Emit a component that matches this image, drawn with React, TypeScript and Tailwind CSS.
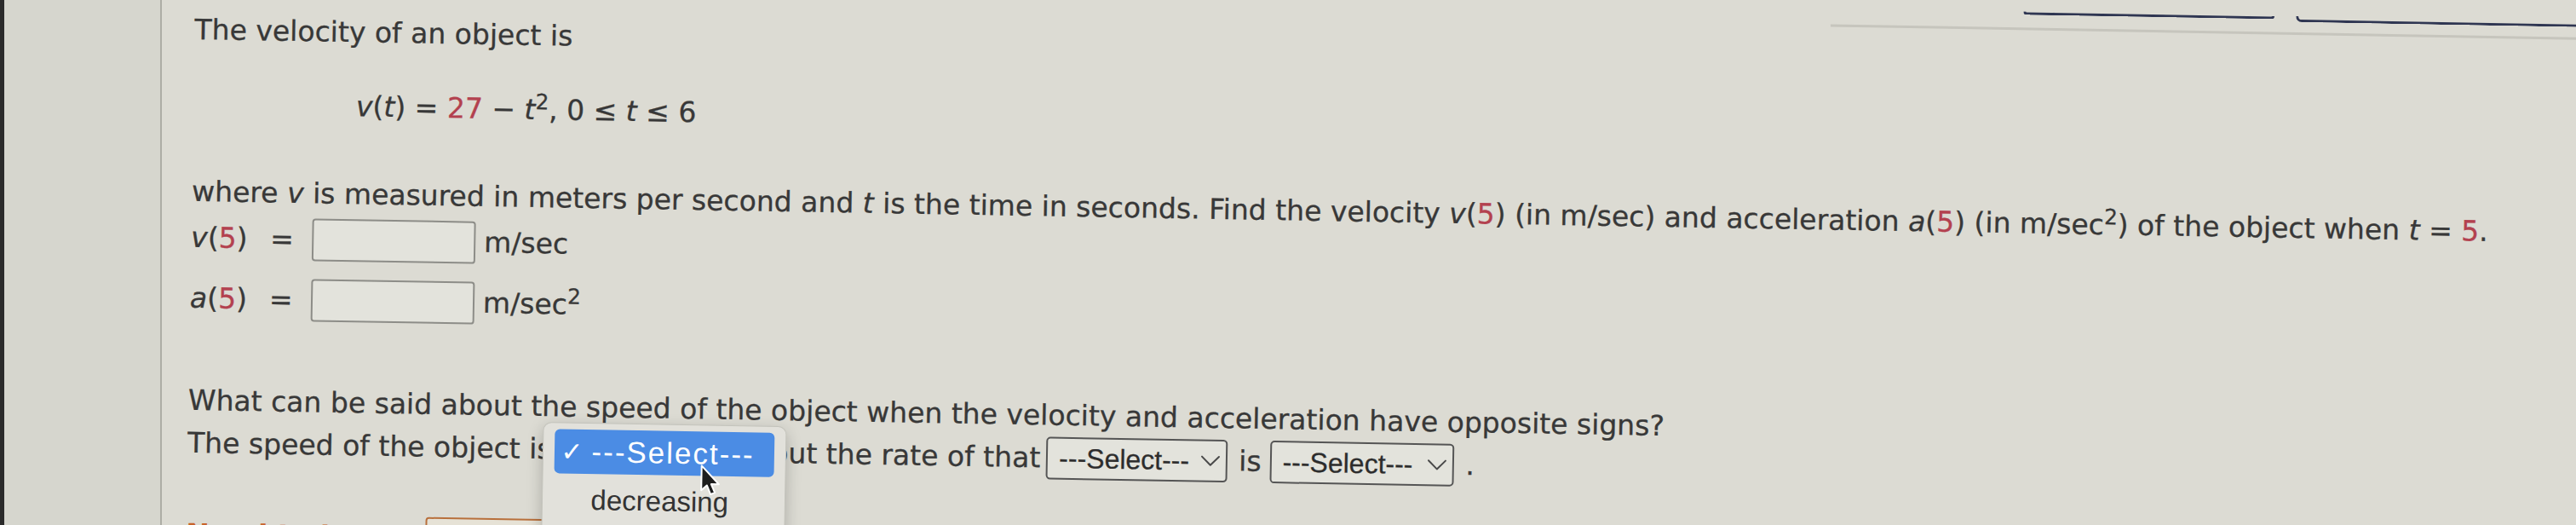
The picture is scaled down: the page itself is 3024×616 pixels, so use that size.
import React from "react";

const I = ({ children }: { children: React.ReactNode }) => <span className="italic">{children}</span>;
const R = ({ children }: { children: React.ReactNode }) => <span className="text-[#b3414f] [-webkit-text-stroke:0.3px_#b3414f]">{children}</span>;

function Chevron() {
  return (
    <svg width="24" height="14" viewBox="0 0 24 14" className="shrink-0">
      <path d="M2 2 L12 12 L22 2" fill="none" stroke="#4a4a4a" strokeWidth="2" strokeLinecap="round" strokeLinejoin="round" />
    </svg>
  );
}

function Select({ w }: { w: string }) {
  return (
    <div className={`flex items-center justify-between ${w} h-[50px] border-2 border-[#555555] rounded-[5px] bg-[#e3e3dc] pl-[13px] pr-[6px] font-['Liberation_Sans',Arial,sans-serif] text-[32px] leading-none text-[#2c2c2c]`}>
      <span>---Select---</span>
      <Chevron />
    </div>
  );
}

function Cursor() {
  return (
    <svg width="28" height="40" viewBox="0 0 28 40" className="absolute left-[184px] top-[45px]">
      <path d="M2 2 L2 31 L8.5 25 L13 35.5 L18 33.5 L13.5 23.5 L22.5 23.5 Z" fill="#1e1e1e" stroke="#ffffff" strokeWidth="2" strokeLinejoin="round" />
    </svg>
  );
}

function Box() {
  return <div className="w-[192px] h-[50px] border-2 border-[#8d8d88] rounded-[4px] bg-[#e3e3dc]" />;
}

export default function App() {
  return (
    <div className="w-[3024px] h-[616px] overflow-hidden flex bg-[#dcdbd3] text-[#383838] [-webkit-text-stroke:0.3px_#383838] font-['DejaVu_Sans',Verdana,sans-serif] text-[33px]">
      <div className="w-[5px] bg-[#2b2b2b]" />
      <div className="w-[185px] bg-[#d6d6ce] border-r-2 border-[#adada5]" />
      <div className="flex-1 relative overflow-hidden">
        <div className="h-full rotate-[1deg]">
          <div className="flex items-start justify-between">
            <p className="pl-[34px] pt-[39px] leading-[40px] whitespace-nowrap">The velocity of an object is</p>
            <div className="w-[880px] h-[22px] border-b-[3px] border-[#c6c5bd] flex items-start gap-[25px] pl-[226px]">
              <div className="w-[295px] h-[4px] border-[3px] border-t-0 border-[#2f3652] rounded-b-[9px]" />
              <div className="flex-1 h-[7px] border-[3px] border-t-0 border-r-0 border-[#2f3652] rounded-bl-[9px]" />
            </div>
          </div>

          <div className="pl-[34px]">
            <p className="mt-[47px] ml-[191px] leading-[40px] whitespace-nowrap">
              <I>v</I>(<I>t</I>) = <R>27</R> − <I>t</I>
              <sup>2</sup>, 0 ≤ <I>t</I> ≤ 6
            </p>

            <p className="mt-[63px] leading-[40px] whitespace-nowrap">
              where <I>v</I> is measured in meters per second and <I>t</I> is the time in seconds. Find the velocity <I>v</I>(<R>5</R>) (in m/sec) and acceleration <I>a</I>(<R>5</R>) (in m/sec<sup>2</sup>) of the object when <I>t</I> = <R>5</R>.
            </p>

            <div className="mt-[9px] flex items-center h-[50px] whitespace-nowrap">
              <span className="w-[93px]">
                <I>v</I>(<R>5</R>)
              </span>
              <span className="w-[49px]">=</span>
              <Box />
              <span className="ml-[10px]">m/sec</span>
            </div>

            <div className="mt-[21px] flex items-center h-[50px] whitespace-nowrap">
              <span className="w-[93px]">
                <I>a</I>(<R>5</R>)
              </span>
              <span className="w-[49px]">=</span>
              <Box />
              <span className="ml-[10px]">
                m/sec<sup>2</sup>
              </span>
            </div>

            <p className="mt-[75px] leading-[40px] whitespace-nowrap">
              What can be said about the speed of the object when the velocity and acceleration have opposite signs?
            </p>

            <div className="mt-[5px] flex items-center h-[50px] whitespace-nowrap">
              <span>The speed of the object is</span>
              <div className="relative ml-[22px]">
                <Select w="w-[214px]" />
                <div className="absolute left-[-33px] top-[-7px] w-[286px] h-[140px] rounded-[10px] bg-[#e2e1db] border border-[#c4c4bc] shadow-[0_6px_18px_rgba(0,0,0,0.22)] pt-[7px] px-[13px] font-['Liberation_Sans',Arial,sans-serif] text-[33px] z-10 [-webkit-text-stroke:0px]">
                  <div className="flex items-center h-[52px] rounded-[6px] bg-[#4b8ce4] text-white pl-[8px]">
                    <span className="w-[36px] font-['DejaVu_Sans',sans-serif] text-[31px] font-bold">✓</span>
                    <span className="text-[35px] tracking-[2px]">---Select---</span>
                  </div>
                  <div className="mt-[11px] pl-[44px] leading-[40px] text-[#333]">decreasing</div>
                  <Cursor />
                </div>
              </div>
              <span className="ml-[21px]">but the rate of that</span>
              <div className="ml-[7px]">
                <Select w="w-[213px]" />
              </div>
              <span className="ml-[13px]">is</span>
              <div className="ml-[10px]">
                <Select w="w-[216px]" />
              </div>
              <span className="ml-[14px]">.</span>
            </div>

            <div className="mt-[57px] flex items-start whitespace-nowrap [-webkit-text-stroke:0px]">
              <span className="w-[281px] pt-[5px] font-bold text-[#c8642a] leading-[40px]">Need Help?</span>
              <div className="w-[140px] h-[46px] border-2 border-[#b8703c] rounded-[4px] bg-[#e6e2d6] text-[28px] text-center leading-[42px] text-[#8a4a20]">Read It</div>
            </div>
          </div>
        </div>
      </div>
    </div>
  );
}
